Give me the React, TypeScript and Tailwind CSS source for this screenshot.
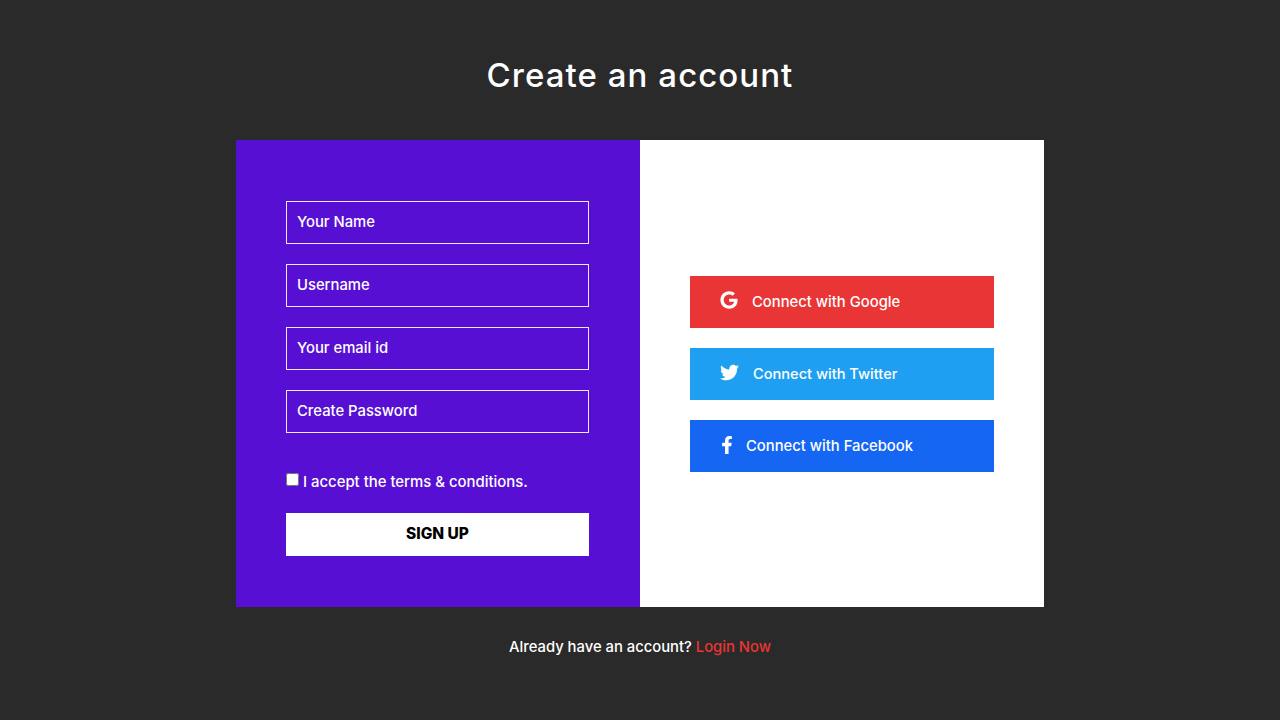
import { FaFacebookF, FaGoogle, FaTwitter } from "react-icons/fa";

const fields = ["Your Name", "Username", "Your email id", "Create Password"];

const App = () => {
  return (
    <main className="h-[720px] bg-[#2a2a2a] flex flex-col items-center font-['Inter',sans-serif] text-white overflow-hidden">
      <h1 className="mt-[54px] h-[42px] text-[33px] leading-[42px] font-medium tracking-[1.05px]">Create an account</h1>

      <section className="mt-[44px] w-[808px] h-[467px] flex">
        <div className="w-[404px] bg-[#5710d3] px-[50px] pt-[61px]">
          {fields.map((field) => (
            <div
              key={field}
              className="w-[303px] h-[43px] mb-[20px] border border-[#f3e6ff] px-[10px] flex items-center text-[14.8px] font-medium"
            >
              {field}
            </div>
          ))}
          <label className="mt-[37px] flex items-center h-[24px] text-[14.9px] font-medium">
            <input type="checkbox" className="w-[13px] h-[13px] mr-[4px] -mt-[5px] appearance-auto" />
            I accept the terms &amp; conditions.
          </label>
          <button className="mt-[19px] w-[303px] h-[43px] pb-[2px] bg-white text-black text-[15.5px] font-extrabold">SIGN UP</button>
        </div>

        <div className="w-[404px] bg-white px-[50px] flex flex-col justify-center gap-[20px]">
          <button className="h-[52px] bg-[#e93535] flex items-center pl-[30px] text-[14.8px] font-medium">
            <FaGoogle className="text-[18px] mr-[14px] mb-[3px]" />
            <span className="mt-[2px]">Connect with Google</span>
          </button>
          <button className="h-[52px] bg-[#1f9ff2] flex items-center pl-[30px] text-[14.6px] font-medium">
            <FaTwitter className="text-[19px] mr-[14px] mb-[2px]" />
            <span className="mt-[2px]">Connect with Twitter</span>
          </button>
          <button className="h-[52px] bg-[#1566f2] flex items-center pl-[28px] text-[14.8px] font-medium">
            <FaFacebookF className="text-[18px] mr-[10px] mb-[2px]" />
            <span className="mt-[2px]">Connect with Facebook</span>
          </button>
        </div>
      </section>

      <p className="mt-[29px] text-[14.8px] font-medium">
        Already have an account? <a className="text-[#e93535]">Login Now</a>
      </p>
    </main>
  );
};

export default App;
